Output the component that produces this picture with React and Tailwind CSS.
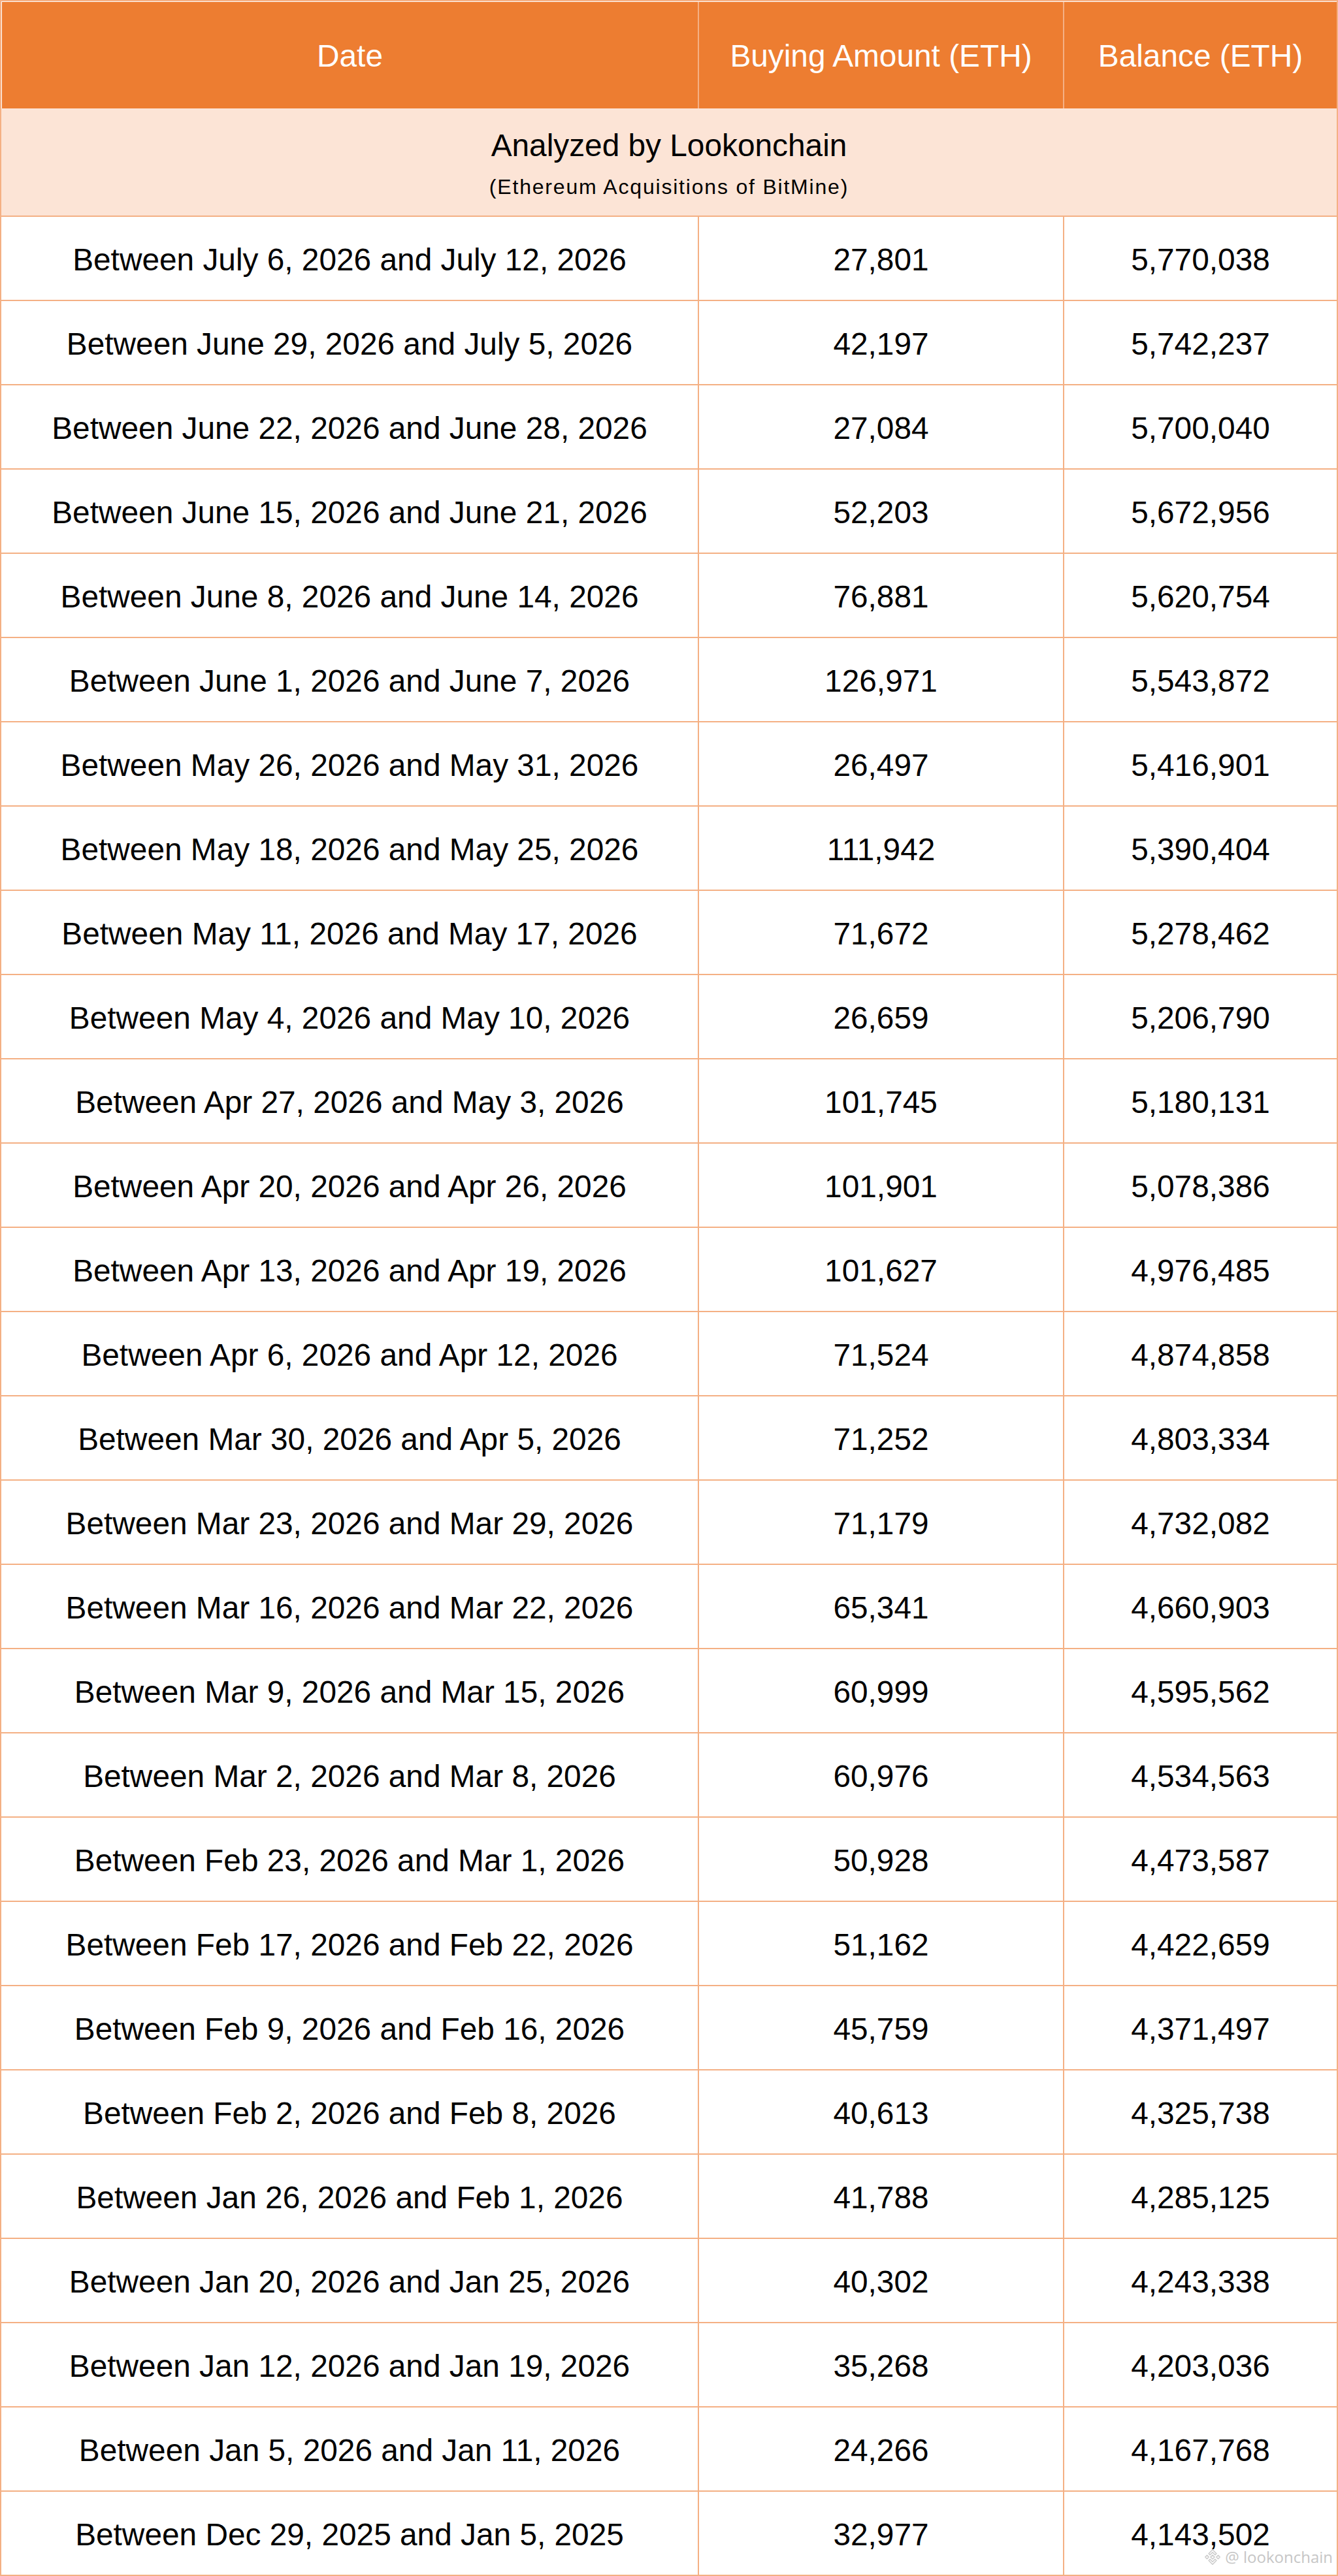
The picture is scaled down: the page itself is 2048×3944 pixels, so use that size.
import React from "react";

const rows = [
  ["Between July 6, 2026 and July 12, 2026", "27,801", "5,770,038"],
  ["Between June 29, 2026 and July 5, 2026", "42,197", "5,742,237"],
  ["Between June 22, 2026 and June 28, 2026", "27,084", "5,700,040"],
  ["Between June 15, 2026 and June 21, 2026", "52,203", "5,672,956"],
  ["Between June 8, 2026 and June 14, 2026", "76,881", "5,620,754"],
  ["Between June 1, 2026 and June 7, 2026", "126,971", "5,543,872"],
  ["Between May 26, 2026 and May 31, 2026", "26,497", "5,416,901"],
  ["Between May 18, 2026 and May 25, 2026", "111,942", "5,390,404"],
  ["Between May 11, 2026 and May 17, 2026", "71,672", "5,278,462"],
  ["Between May 4, 2026 and May 10, 2026", "26,659", "5,206,790"],
  ["Between Apr 27, 2026 and May 3, 2026", "101,745", "5,180,131"],
  ["Between Apr 20, 2026 and Apr 26, 2026", "101,901", "5,078,386"],
  ["Between Apr 13, 2026 and Apr 19, 2026", "101,627", "4,976,485"],
  ["Between Apr 6, 2026 and Apr 12, 2026", "71,524", "4,874,858"],
  ["Between Mar 30, 2026 and Apr 5, 2026", "71,252", "4,803,334"],
  ["Between Mar 23, 2026 and Mar 29, 2026", "71,179", "4,732,082"],
  ["Between Mar 16, 2026 and Mar 22, 2026", "65,341", "4,660,903"],
  ["Between Mar 9, 2026 and Mar 15, 2026", "60,999", "4,595,562"],
  ["Between Mar 2, 2026 and Mar 8, 2026", "60,976", "4,534,563"],
  ["Between Feb 23, 2026 and Mar 1, 2026", "50,928", "4,473,587"],
  ["Between Feb 17, 2026 and Feb 22, 2026", "51,162", "4,422,659"],
  ["Between Feb 9, 2026 and Feb 16, 2026", "45,759", "4,371,497"],
  ["Between Feb 2, 2026 and Feb 8, 2026", "40,613", "4,325,738"],
  ["Between Jan 26, 2026 and Feb 1, 2026", "41,788", "4,285,125"],
  ["Between Jan 20, 2026 and Jan 25, 2026", "40,302", "4,243,338"],
  ["Between Jan 12, 2026 and Jan 19, 2026", "35,268", "4,203,036"],
  ["Between Jan 5, 2026 and Jan 11, 2026", "24,266", "4,167,768"],
  ["Between Dec 29, 2025 and Jan 5, 2025", "32,977", "4,143,502"],
];

function WatermarkLogo() {
  return (
    <svg width="30" height="26" viewBox="0 0 24 22" fill="none" stroke="#cbcbcb" strokeWidth="1.3" strokeLinejoin="round">
      <path d="M12 1.5 L17 6.5 L15.3 8.2 L12 4.9 L8.7 8.2 L7 6.5 Z" />
      <path d="M12 20.5 L17 15.5 L15.3 13.8 L12 17.1 L8.7 13.8 L7 15.5 Z" />
      <path d="M12 8.4 L14.6 11 L12 13.6 L9.4 11 Z" />
      <path d="M2.5 11 L4.8 8.7 L7.1 11 L4.8 13.3 Z" />
      <path d="M21.5 11 L19.2 8.7 L16.9 11 L19.2 13.3 Z" />
    </svg>
  );
}

export default function App() {
  return (
    <div className="relative w-[2048px] bg-white font-['Liberation_Sans',Arial,Helvetica,sans-serif] text-black">
      <div className="border-x-2 border-t-2 border-[#F4B084]">
        <div className="flex h-[164px] border-t border-white bg-[#ED7D31] text-[47.8px] leading-none text-white">
          <div className="flex w-[1068px] items-center justify-center border-l border-r-2 border-l-white border-r-[#F4B084] pt-[2px]">
            Date
          </div>
          <div className="flex w-[559px] items-center justify-center border-r-2 border-[#F4B084] pt-[2px]">
            Buying Amount (ETH)
          </div>
          <div className="flex flex-1 items-center justify-center pt-[2px]">Balance (ETH)</div>
        </div>

        <div className="flex h-[166px] flex-col items-center border-b-2 border-[#F4B084] bg-[#FCE4D6] pt-[30px]">
          <div className="text-[47.8px] leading-[54px]">Analyzed by Lookonchain</div>
          <div className="mt-[18px] text-[32px] leading-[37px] tracking-[1.8px]">(Ethereum Acquisitions of BitMine)</div>
        </div>

        {rows.map(([date, amount, balance]) => (
          <div key={date} className="flex h-[129px] border-b-2 border-[#F4B084] text-[47.8px] leading-none">
            <div className="flex w-[1068px] items-center justify-center border-r-2 border-[#F4B084] pt-[4px]">
              {date}
            </div>
            <div className="flex w-[559px] items-center justify-center border-r-2 border-[#F4B084] pt-[4px]">
              {amount}
            </div>
            <div className="flex flex-1 items-center justify-center pt-[4px]">{balance}</div>
          </div>
        ))}
      </div>

      <div className="absolute bottom-[16px] right-[8px] flex items-center gap-[4px] font-['Open_Sans',sans-serif] text-[24px] leading-none text-[#c6c6c6]">
        <WatermarkLogo />
        <span>@ lookonchain</span>
      </div>
    </div>
  );
}
